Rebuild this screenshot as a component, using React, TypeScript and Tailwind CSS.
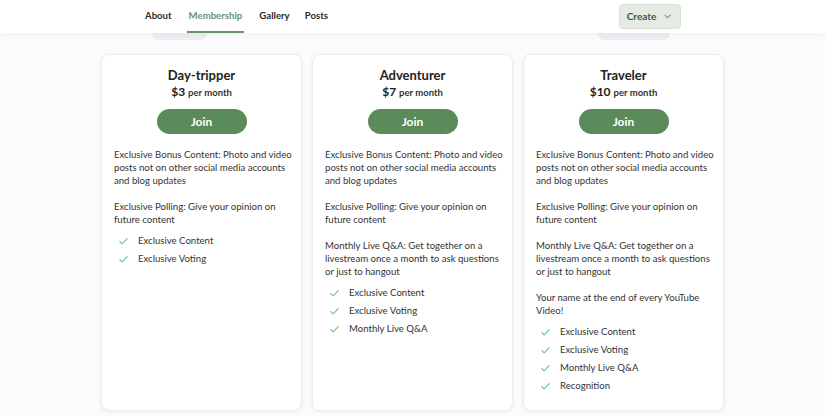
import { ChevronDown, Check } from 'lucide-react';

type Tier = {
  name: string;
  price: string;
  perks: string[];
  features: string[];
};

const tiers: Tier[] = [
  {
    name: 'Day-tripper',
    price: '$3',
    perks: [
      'Exclusive Bonus Content: Photo and video posts not on other social media accounts and blog updates',
      'Exclusive Polling: Give your opinion on future content',
    ],
    features: ['Exclusive Content', 'Exclusive Voting'],
  },
  {
    name: 'Adventurer',
    price: '$7',
    perks: [
      'Exclusive Bonus Content: Photo and video posts not on other social media accounts and blog updates',
      'Exclusive Polling: Give your opinion on future content',
      'Monthly Live Q&A: Get together on a livestream once a month to ask questions or just to hangout',
    ],
    features: ['Exclusive Content', 'Exclusive Voting', 'Monthly Live Q&A'],
  },
  {
    name: 'Traveler',
    price: '$10',
    perks: [
      'Exclusive Bonus Content: Photo and video posts not on other social media accounts and blog updates',
      'Exclusive Polling: Give your opinion on future content',
      'Monthly Live Q&A: Get together on a livestream once a month to ask questions or just to hangout',
      'Your name at the end of every YouTube Video!',
    ],
    features: ['Exclusive Content', 'Exclusive Voting', 'Monthly Live Q&A', 'Recognition'],
  },
];

const TierCard = ({ tier }: { tier: Tier }) => (
  <div className="w-[201px] h-[357px] shrink-0 bg-white rounded-lg border border-[#ececf0] shadow-[0_1px_4px_rgba(0,0,0,0.06)] pl-[12px] pr-[6px] pt-[12px]">
    <h3 className="text-center text-[13px] leading-[16px] font-bold text-[#222] pr-[6px]">{tier.name}</h3>
    <p className="flex items-baseline justify-center h-[14px] leading-[14px] mt-[2px] pr-[6px] text-[#222]">
      <span className="text-[12px] font-bold">{tier.price}</span>
      <span className="text-[9.5px] font-bold text-[#333] ml-[3px]">per month</span>
    </p>
    <div className="flex justify-center mt-[10px] pr-[6px]">
      <button className="w-[90px] h-[25px] rounded-full bg-[#5b8a5b] text-white text-[12px] font-bold">
        Join
      </button>
    </div>
    <div className="mt-[14px] flex flex-col gap-[13px]">
      {tier.perks.map((perk) => (
        <p key={perk} className="text-[9.6px] leading-[13px] text-[#333]">
          {perk}
        </p>
      ))}
    </div>
    <ul className="mt-[6px] flex flex-col">
      {tier.features.map((f) => (
        <li key={f} className="flex items-center h-[18px] pl-[4px] gap-[9px] text-[9.6px] text-[#333]">
          <Check className="w-[11px] h-[11px] text-[#72c4a0]" strokeWidth={2.5} />
          {f}
        </li>
      ))}
    </ul>
  </div>
);

const App = () => {
  return (
    <div
      className="min-h-screen bg-[#fbfbfd] overflow-hidden"
      style={{ fontFamily: 'Lato, "Noto Sans", sans-serif' }}
    >
      {/* top bar */}
      <header className="relative z-10 h-[33px] bg-white shadow-[0_2px_6px_rgba(0,0,0,0.04)] flex items-center justify-between pl-[145px] pr-[144px]">
        <nav className="flex items-center gap-[15px] h-full text-[9.6px] font-bold text-[#2b2b2b]">
          <a className="h-full flex items-center">About</a>
          <a className="h-full flex items-center text-[#6f8f6f] border-b-2 border-[#6f8f6f] pt-[2px] px-[2px]">
            Membership
          </a>
          <a className="h-full flex items-center">Gallery</a>
          <a className="h-full flex items-center">Posts</a>
        </nav>
        <button className="w-[62px] h-[25px] rounded bg-[#e4ebe3] border border-[#d8e0d6] flex items-center justify-center gap-[6px] text-[10px] font-bold text-[#465646]">
          Create
          <ChevronDown className="w-[11px] h-[11px]" strokeWidth={2} />
        </button>
      </header>

      {/* faded tab shapes peeking under the bar */}
      <div className="relative h-0">
        <div className="absolute left-[152px] top-0 w-[55px] h-[7px] rounded-b-full bg-[#eeeef2]" />
        <div className="absolute left-[598px] top-0 w-[72px] h-[7px] rounded-b-full bg-[#eeeef2]" />
      </div>

      <main className="flex justify-center gap-[10px] pt-[21px]">
        {tiers.map((t) => (
          <TierCard key={t.name} tier={t} />
        ))}
      </main>
    </div>
  );
};

export default App;
